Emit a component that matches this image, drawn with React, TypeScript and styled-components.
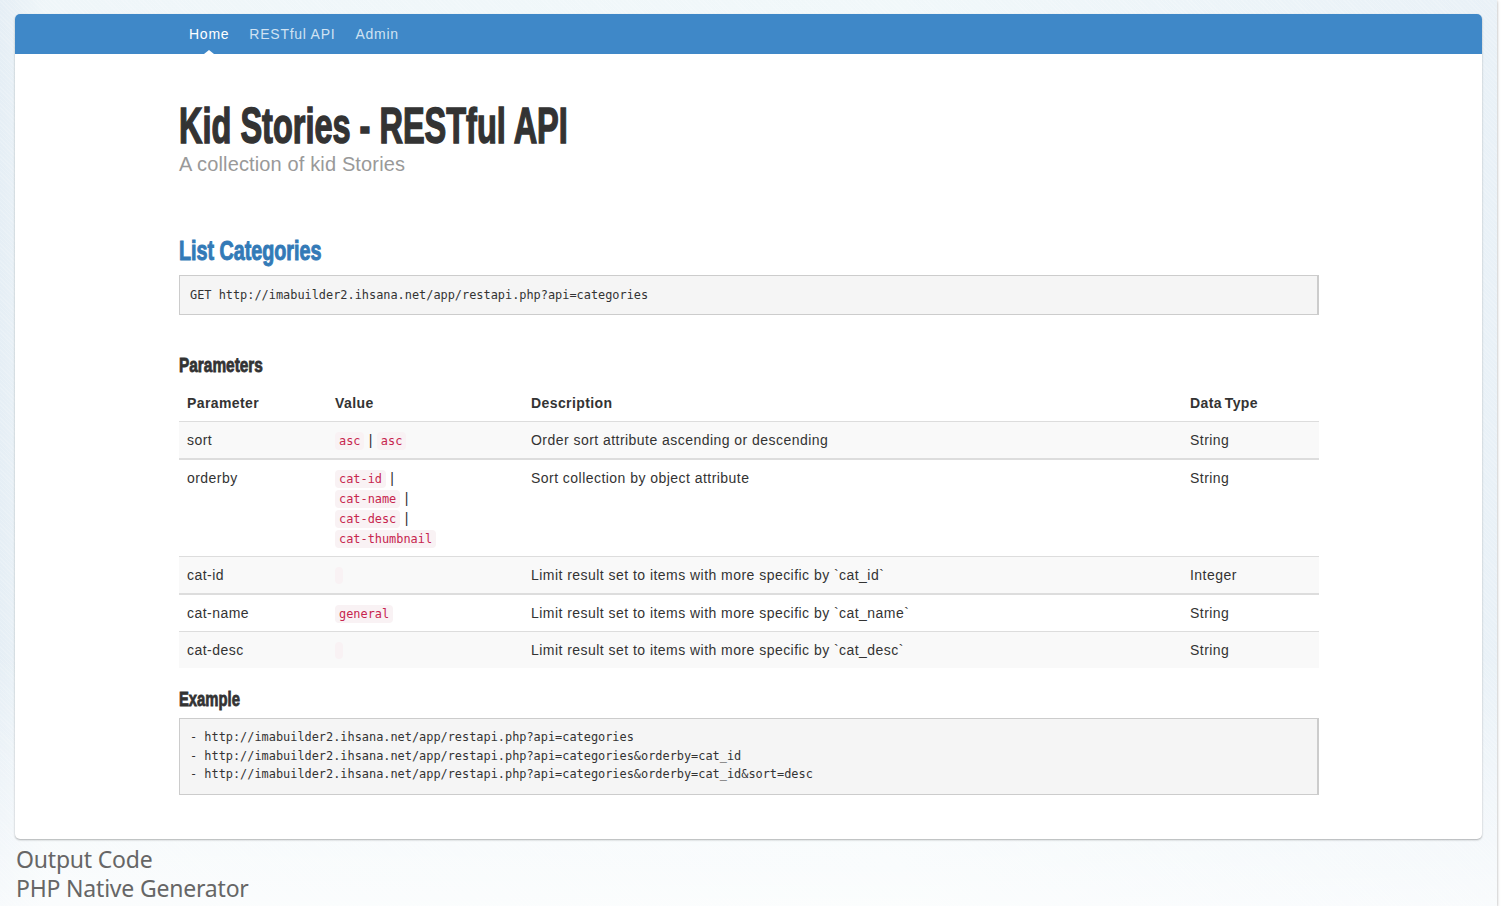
import React from "react";
import styled, { createGlobalStyle } from "styled-components";

const Global = createGlobalStyle`
  html, body { margin: 0; padding: 0; background: #fff; }
  body { font-family: "Liberation Sans", Arial, sans-serif; color: #333; font-size: 14px; overflow: hidden; }
`;

const Page = styled.div`
  box-sizing: border-box;
  width: 1497px;
  height: 906px;
  padding: 14px 15px 0;
  overflow: hidden;
  background:
    repeating-linear-gradient(45deg, rgba(255,255,255,.16) 0 1px, rgba(255,255,255,0) 1px 3px),
    linear-gradient(180deg, rgba(255,255,255,0) 72%, rgba(255,255,255,.7) 100%),
    linear-gradient(90deg, #e5eef5 0, #eff6f9 3%, #f1f8fa 60%, #e9f1f7 100%);
  box-shadow: 0 1px 3px rgba(0,0,0,.35);
`;

const Card = styled.main`
  box-sizing: border-box;
  height: 825px;
  background: #fff;
  border-radius: 5px;
  box-shadow: 0 1px 2px rgba(0,0,0,.3);
  overflow: hidden;
`;

const Navbar = styled.nav`
  height: 40px;
  background: #3f88c8;
  padding-left: 164px;
  display: flex;
  align-items: stretch;
`;

const NavItem = styled.a<{ $active?: boolean }>`
  position: relative;
  display: flex;
  align-items: center;
  padding: 0 10px;
  font-size: 14px;
  letter-spacing: 0.75px;
  color: ${(p) => (p.$active ? "#fff" : "#d0e2f2")};
  &::after {
    content: "";
    display: ${(p) => (p.$active ? "block" : "none")};
    position: absolute;
    left: 50%;
    bottom: 0;
    margin-left: -5px;
    border: 5px solid transparent;
    border-top: 0;
    border-bottom: 4px solid #fff;
  }
`;

const Container = styled.div`
  width: 1140px;
  margin-left: 164px;
`;

const Title = styled.h1`
  margin: 47px 0 0;
  width: max-content;
  height: 51px;
  font-size: 50px;
  line-height: 51px;
  font-weight: 700;
  color: #333;
  transform: scaleX(0.65);
  transform-origin: left center;
  -webkit-text-stroke: 1.5px #333;
`;

const Subtitle = styled.p`
  margin: 1px 0 0;
  font-size: 20px;
  line-height: 22px;
  letter-spacing: 0.14px;
  color: #999;
`;

const SectionTitle = styled.h2`
  margin: 60px 0 8px;
  width: max-content;
  height: 32px;
  font-size: 27px;
  line-height: 32px;
  font-weight: 700;
  color: #337ab7;
  transform: scaleX(0.73);
  transform-origin: left center;
  -webkit-text-stroke: 1px #337ab7;
`;

const Pre = styled.pre`
  box-sizing: border-box;
  margin: 0;
  padding: 9.75px 10px;
  border: 1px solid #ccc;
  border-right-width: 2px;
  background: #f5f5f5;
  font-family: "DejaVu Sans Mono", monospace;
  font-size: 11.9px;
  line-height: 18.5px;
  color: #333;
`;

const SubTitle = styled.h3<{ $top: number; $bottom: number; $scale: number }>`
  margin: ${(p) => p.$top}px 0 ${(p) => p.$bottom}px;
  width: max-content;
  height: 24px;
  font-size: 20px;
  line-height: 24px;
  font-weight: 700;
  color: #333;
  transform: scaleX(${(p) => p.$scale});
  transform-origin: left center;
  -webkit-text-stroke: 0.8px #333;
`;

const Table = styled.table`
  width: 1140px;
  border-collapse: collapse;
  table-layout: fixed;
`;

const Th = styled.th<{ $w: number }>`
  width: ${(p) => p.$w}px;
  box-sizing: border-box;
  height: 36px;
  padding: 0 8px;
  text-align: left;
  font-size: 14px;
  letter-spacing: 0.4px;
  word-spacing: -1.5px;
  color: #333;
  border-bottom: 1px solid #ddd;
`;

const Row = styled.tr<{ $odd?: boolean; $thick?: boolean }>`
  background: ${(p) => (p.$odd ? "#f9f9f9" : "#fff")};
  border-bottom: ${(p) => (p.$thick ? "2px" : "1px")} solid #ddd;
  &:last-child { border-bottom: 0; }
`;

const Td = styled.td`
  box-sizing: border-box;
  padding: 8px;
  font-size: 14px;
  line-height: 20px;
  letter-spacing: 0.46px;
  vertical-align: top;
`;

const Code = styled.code`
  padding: 2px 4px;
  border-radius: 4px;
  background: #f9f2f4;
  color: #c7254e;
  font-family: "DejaVu Sans Mono", monospace;
  font-size: 11.9px;
  line-height: 1;
  letter-spacing: 0;
`;

const Empty = styled(Code)`
  display: inline-block;
  width: 8px;
  height: 17px;
  padding: 0;
  vertical-align: top;
  margin-top: 2px;
`;

const Bar = styled.span`
  letter-spacing: 0;
  color: #333;
`;

const Footer = styled.footer`
  padding-left: 1px;
  margin-top: 6px;
  font-family: "Noto Sans", "Open Sans", sans-serif;
  font-size: 23px;
  line-height: 29px;
  color: #666;
  letter-spacing: -0.2px;
`;

const rows = [
  { odd: true, thick: true, p: "sort", desc: "Order sort attribute ascending or descending", type: "String", v: <><Code>asc</Code> <Bar>|</Bar> <Code>asc</Code></> },
  { odd: false, thick: false, p: "orderby", desc: "Sort collection by object attribute", type: "String", v: <><Code>cat-id</Code> <Bar>|</Bar><br /><Code>cat-name</Code> <Bar>|</Bar><br /><Code>cat-desc</Code> <Bar>|</Bar><br /><Code>cat-thumbnail</Code></> },
  { odd: true, thick: true, p: "cat-id", desc: "Limit result set to items with more specific by `cat_id`", type: "Integer", v: <Empty /> },
  { odd: false, thick: false, p: "cat-name", desc: "Limit result set to items with more specific by `cat_name`", type: "String", v: <Code>general</Code> },
  { odd: true, thick: false, p: "cat-desc", desc: "Limit result set to items with more specific by `cat_desc`", type: "String", v: <Empty /> },
];

export default function App() {
  return (
    <Page>
      <Global />
      <Card>
        <Navbar>
          <NavItem $active>Home</NavItem>
          <NavItem>RESTful API</NavItem>
          <NavItem>Admin</NavItem>
        </Navbar>
        <Container>
          <Title>Kid Stories - RESTful API</Title>
          <Subtitle>A collection of kid Stories</Subtitle>
          <SectionTitle>List Categories</SectionTitle>
          <Pre>GET http://imabuilder2.ihsana.net/app/restapi.php?api=categories</Pre>
          <SubTitle $top={38} $bottom={8} $scale={0.77}>Parameters</SubTitle>
          <Table>
            <thead>
              <tr>
                <Th $w={148}>Parameter</Th>
                <Th $w={196}>Value</Th>
                <Th $w={659}>Description</Th>
                <Th $w={137}>Data Type</Th>
              </tr>
            </thead>
            <tbody>
              {rows.map((r) => (
                <Row key={r.p} $odd={r.odd} $thick={r.thick}>
                  <Td>{r.p}</Td>
                  <Td>{r.v}</Td>
                  <Td>{r.desc}</Td>
                  <Td>{r.type}</Td>
                </Row>
              ))}
            </tbody>
          </Table>
          <SubTitle $top={19} $bottom={7} $scale={0.74}>Example</SubTitle>
          <Pre>{`- http://imabuilder2.ihsana.net/app/restapi.php?api=categories
- http://imabuilder2.ihsana.net/app/restapi.php?api=categories&orderby=cat_id
- http://imabuilder2.ihsana.net/app/restapi.php?api=categories&orderby=cat_id&sort=desc`}</Pre>
        </Container>
      </Card>
      <Footer>
        Output Code
        <br />
        PHP Native Generator
      </Footer>
    </Page>
  );
}
